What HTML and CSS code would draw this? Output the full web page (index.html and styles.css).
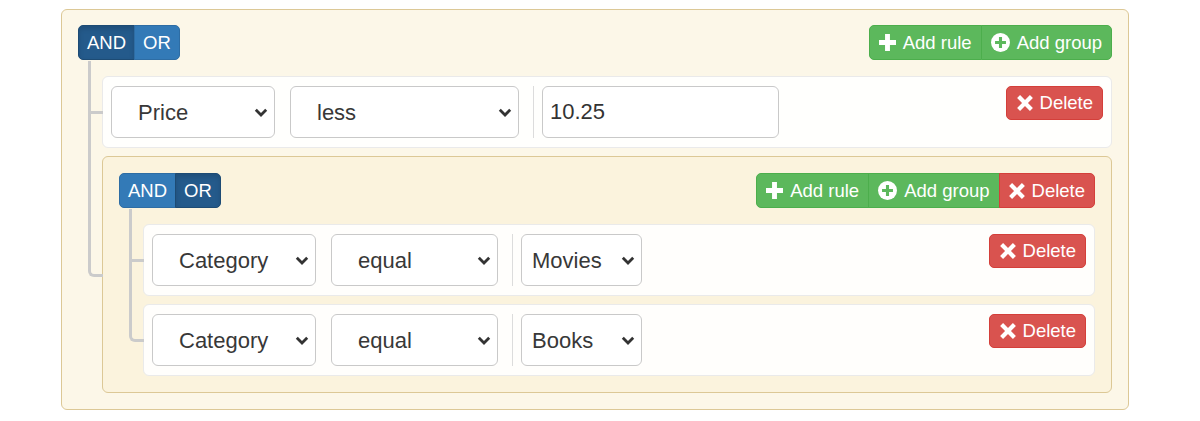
FILE: index.html
```html
<!DOCTYPE html>
<html lang="en">
<head>
    <meta charset="UTF-8">
    <meta name="viewport" content="width=device-width, initial-scale=1.0">
    <title>Query Builder</title>
    <link rel="stylesheet" href="styles.css">
</head>
<body>
    <div class="builder">
        <div class="group">
            <div class="group-header">
                <div class="btn-group">
                    <button class="btn btn-primary active">AND</button>
                    <button class="btn btn-primary">OR</button>
                </div>
                <div class="btn-group">
                    <button class="btn btn-success">
                        <svg class="icon" viewBox="0 0 16 16" width="17" height="17"><path d="M5.7 0h4.6v5.7H16v4.6h-5.7V16H5.7v-5.7H0V5.7h5.7z" fill="#fff"/></svg>
                        Add rule
                    </button>
                    <button class="btn btn-success">
                        <svg class="icon" viewBox="0 0 16 16" width="19" height="19"><circle cx="8" cy="8" r="8" fill="#fff"/><path d="M6.7 3.4h2.6v3.3h3.3v2.6H9.3v3.3H6.7V9.3H3.4V6.7h3.3z" fill="#5cb85c"/></svg>
                        Add group
                    </button>
                </div>
            </div>
            <ul class="rules-list">
                <li class="rule">
                    <div class="select filter">
                        <select><option>Price</option></select>
                        <svg class="caret" viewBox="0 0 14 9" width="14" height="9"><path d="M1.8 1.8l5.2 5.2 5.2-5.2" fill="none" stroke="#333" stroke-width="2.8"/></svg>
                    </div>
                    <div class="select operator-wide">
                        <select><option>less</option></select>
                        <svg class="caret" viewBox="0 0 14 9" width="14" height="9"><path d="M1.8 1.8l5.2 5.2 5.2-5.2" fill="none" stroke="#333" stroke-width="2.8"/></svg>
                    </div>
                    <div class="rule-value">
                        <input type="text" class="value-input" value="10.25">
                    </div>
                    <button class="btn btn-danger delete">
                        <svg class="icon" viewBox="0 0 16 16" width="16" height="16"><path d="M1.6 1.6l12.8 12.8M14.4 1.6L1.6 14.4" stroke="#fff" stroke-width="4.2"/></svg>
                        Delete
                    </button>
                </li>
                <li class="group">
                    <div class="group-header">
                        <div class="btn-group">
                            <button class="btn btn-primary">AND</button>
                            <button class="btn btn-primary active">OR</button>
                        </div>
                        <div class="btn-group">
                            <button class="btn btn-success">
                                <svg class="icon" viewBox="0 0 16 16" width="17" height="17"><path d="M5.7 0h4.6v5.7H16v4.6h-5.7V16H5.7v-5.7H0V5.7h5.7z" fill="#fff"/></svg>
                                Add rule
                            </button>
                            <button class="btn btn-success">
                                <svg class="icon" viewBox="0 0 16 16" width="19" height="19"><circle cx="8" cy="8" r="8" fill="#fff"/><path d="M6.7 3.4h2.6v3.3h3.3v2.6H9.3v3.3H6.7V9.3H3.4V6.7h3.3z" fill="#5cb85c"/></svg>
                                Add group
                            </button>
                            <button class="btn btn-danger">
                                <svg class="icon" viewBox="0 0 16 16" width="16" height="16"><path d="M1.6 1.6l12.8 12.8M14.4 1.6L1.6 14.4" stroke="#fff" stroke-width="4.2"/></svg>
                                Delete
                            </button>
                        </div>
                    </div>
                    <ul class="rules-list">
                        <li class="rule">
                            <div class="select filter">
                                <select><option>Category</option></select>
                                <svg class="caret" viewBox="0 0 14 9" width="14" height="9"><path d="M1.8 1.8l5.2 5.2 5.2-5.2" fill="none" stroke="#333" stroke-width="2.8"/></svg>
                            </div>
                            <div class="select operator">
                                <select><option>equal</option></select>
                                <svg class="caret" viewBox="0 0 14 9" width="14" height="9"><path d="M1.8 1.8l5.2 5.2 5.2-5.2" fill="none" stroke="#333" stroke-width="2.8"/></svg>
                            </div>
                            <div class="rule-value">
                                <div class="select value">
                                    <select><option>Movies</option></select>
                                    <svg class="caret" viewBox="0 0 14 9" width="14" height="9"><path d="M1.8 1.8l5.2 5.2 5.2-5.2" fill="none" stroke="#333" stroke-width="2.8"/></svg>
                                </div>
                            </div>
                            <button class="btn btn-danger delete">
                                <svg class="icon" viewBox="0 0 16 16" width="16" height="16"><path d="M1.6 1.6l12.8 12.8M14.4 1.6L1.6 14.4" stroke="#fff" stroke-width="4.2"/></svg>
                                Delete
                            </button>
                        </li>
                        <li class="rule">
                            <div class="select filter">
                                <select><option>Category</option></select>
                                <svg class="caret" viewBox="0 0 14 9" width="14" height="9"><path d="M1.8 1.8l5.2 5.2 5.2-5.2" fill="none" stroke="#333" stroke-width="2.8"/></svg>
                            </div>
                            <div class="select operator">
                                <select><option>equal</option></select>
                                <svg class="caret" viewBox="0 0 14 9" width="14" height="9"><path d="M1.8 1.8l5.2 5.2 5.2-5.2" fill="none" stroke="#333" stroke-width="2.8"/></svg>
                            </div>
                            <div class="rule-value">
                                <div class="select value">
                                    <select><option>Books</option></select>
                                    <svg class="caret" viewBox="0 0 14 9" width="14" height="9"><path d="M1.8 1.8l5.2 5.2 5.2-5.2" fill="none" stroke="#333" stroke-width="2.8"/></svg>
                                </div>
                            </div>
                            <button class="btn btn-danger delete">
                                <svg class="icon" viewBox="0 0 16 16" width="16" height="16"><path d="M1.6 1.6l12.8 12.8M14.4 1.6L1.6 14.4" stroke="#fff" stroke-width="4.2"/></svg>
                                Delete
                            </button>
                        </li>
                    </ul>
                </li>
            </ul>
        </div>
    </div>
</body>
</html>
```

FILE: styles.css
```css
body {
    font-family: "Liberation Sans", Arial, sans-serif;
    margin: 0;
    padding: 0;
    background-color: white;
}

.builder {
    width: 1068px;
    margin: 9px 0 0 61px;
}

.group {
    border: 1px solid #dcc896;
    border-radius: 6px;
    background: rgba(250, 240, 210, 0.5);
    padding: 15px 16px 16px 16px;
}

.rules-list .group {
    padding-top: 16px;
}

.group-header {
    display: flex;
    justify-content: space-between;
    align-items: flex-start;
}

/* buttons */
.btn-group {
    display: flex;
}

.btn {
    display: flex;
    align-items: center;
    gap: 7px;
    height: 35px;
    padding: 0 9px;
    font-family: inherit;
    font-size: 18.5px;
    color: white;
    border: 1px solid transparent;
    border-radius: 5px;
    cursor: pointer;
}

.btn-group .btn {
    border-radius: 0;
}

.btn-group .btn + .btn {
    margin-left: -1px;
}

.btn-group .btn:first-child {
    border-radius: 5px 0 0 5px;
}

.btn-group .btn:last-child {
    border-radius: 0 5px 5px 0;
}

.btn-primary {
    background-color: #337ab7;
    border-color: #2e6da4;
    padding: 0 8px;
}

.btn-primary.active {
    background-color: #245a8b;
    border-color: #1d4b74;
    box-shadow: inset 0 3px 5px rgba(0, 0, 0, 0.125);
}

.btn-success {
    background-color: #5cb85c;
    border-color: #4cae4c;
}

.btn-danger {
    background-color: #d9534f;
    border-color: #d43f3a;
}

.icon {
    flex: none;
}

/* tree */
.rules-list {
    list-style: none;
    margin: 16px 0 0 0;
    padding: 0 0 0 24px;
}

.rules-list > li {
    position: relative;
}

.rules-list > li + li {
    margin-top: 8px;
}

.rules-list > li::before,
.rules-list > li::after {
    content: '';
    position: absolute;
    left: -15px;
    width: 15px;
    box-sizing: border-box;
    border: 0 solid #cbcbcb;
}

.rules-list > li::before {
    top: -8px;
    height: calc(50% + 10px);
    border-width: 0 0 3px 3px;
}

.rules-list > li:first-child::before {
    top: -16px;
    height: calc(50% + 18px);
}

.rules-list > li:last-child::before {
    border-bottom-left-radius: 6px;
}

.rules-list > li::after {
    top: 50%;
    height: calc(50% + 8px);
    border-width: 0 0 0 3px;
}

.rules-list > li:last-child::after {
    display: none;
}

/* rule row */
.rule {
    display: flex;
    align-items: flex-start;
    padding: 9px 8px;
    border: 1px solid #eaeaea;
    border-radius: 6px;
    background: rgba(255, 255, 255, 0.9);
}

.select {
    position: relative;
    margin-right: 15px;
}

.select select {
    appearance: none;
    -webkit-appearance: none;
    width: 100%;
    height: 52px;
    padding: 0 30px 0 26px;
    font-family: inherit;
    font-size: 22px;
    color: #383838;
    background: white;
    border: 1px solid #c9c9c9;
    border-radius: 6px;
}

.caret {
    position: absolute;
    right: 7px;
    top: 22px;
    pointer-events: none;
}

.filter {
    width: 164px;
}

.operator-wide {
    width: 229px;
}

.operator {
    width: 167px;
}

.rule-value {
    display: flex;
    height: 52px;
    margin-left: -1px;
    padding-left: 8px;
    border-left: 1px solid #dcdcdc;
}

.rule-value .select {
    margin-right: 0;
}

.value {
    width: 121px;
}

.value select {
    padding-left: 10px;
}

.value-input {
    width: 237px;
    height: 52px;
    box-sizing: border-box;
    padding: 0 7px;
    font-family: inherit;
    font-size: 22px;
    color: #333;
    border: 1px solid #c9c9c9;
    border-radius: 6px;
}

.rule .delete {
    margin-left: auto;
    height: 34px;
    padding: 0 9px 0 10px;
}
```
